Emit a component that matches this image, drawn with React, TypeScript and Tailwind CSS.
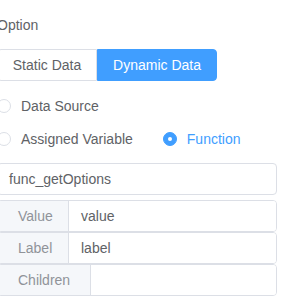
import React from "react";

function Radio({ label, checked, className = "" }: { label: string; checked?: boolean; className?: string }) {
  return (
    <label className={`flex items-center gap-[10px] cursor-pointer ${className}`}>
      {checked ? (
        <span className="w-[14px] h-[14px] rounded-full bg-[#409eff] border border-[#409eff] flex items-center justify-center shrink-0">
          <span className="w-[4px] h-[4px] rounded-full bg-white" />
        </span>
      ) : (
        <span className="w-[14px] h-[14px] rounded-full bg-white border border-[#dcdfe6] shrink-0" />
      )}
      <span className={checked ? "text-[#409eff]" : "text-[#606266]"}>{label}</span>
    </label>
  );
}

function FieldRow({ label, value, labelWidth }: { label: string; value: string; labelWidth: string }) {
  return (
    <div className="flex h-8 border border-[#dcdfe6] rounded-[4px] overflow-hidden">
      <div className={`${labelWidth} bg-[#f5f7fa] text-[#909399] border-r border-[#dcdfe6] flex items-center pl-[20px] shrink-0`}>
        {label}
      </div>
      <div className="flex-1 flex items-center px-[12px] text-[#606266] bg-white">{value}</div>
    </div>
  );
}

export default function App() {
  return (
    <div
      className="w-[284px] h-[299px] overflow-hidden bg-white text-[14px]"
      style={{ fontFamily: '"Liberation Sans", Arial, sans-serif' }}
    >
      <div className="-ml-[3px] w-[280px]">
        <p className="mt-[15px] h-5 leading-5 text-[#606266]">Option</p>

        <div className="mt-[14px] flex h-8">
          <button className="w-[100px] h-8 border border-[#dcdfe6] rounded-l-[4px] bg-white text-[#606266]">
            Static Data
          </button>
          <button className="w-[120px] h-8 border border-[#409eff] rounded-r-[4px] bg-[#409eff] text-white">
            Dynamic Data
          </button>
        </div>

        <div className="mt-[15px] h-5 flex items-center">
          <Radio label="Data Source" />
        </div>
        <div className="mt-[13px] h-5 flex items-center">
          <Radio label="Assigned Variable" className="mr-[30px]" />
          <Radio label="Function" checked />
        </div>

        <div className="mt-[14px] h-8 border border-[#dcdfe6] rounded-[4px] flex items-center px-[11px] text-[#606266]">
          func_getOptions
        </div>

        <div className="mt-[5px] flex flex-col">
          <FieldRow label="Value" value="value" labelWidth="w-[71px]" />
          <FieldRow label="Label" value="label" labelWidth="w-[71px]" />
          <FieldRow label="Children" value="" labelWidth="w-[93px]" />
        </div>
      </div>
    </div>
  );
}
